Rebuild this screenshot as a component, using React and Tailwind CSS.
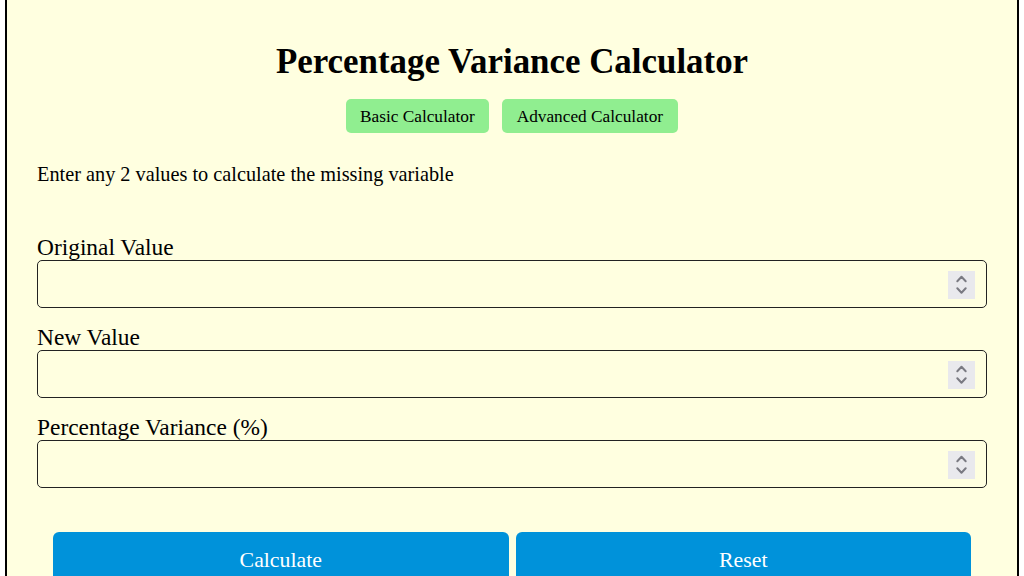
import React from "react";

function Spinner() {
  return (
    <div className="absolute right-[11px] top-[10px] w-[27px] h-[28px] bg-[#e9e9ed]">
      <svg width="27" height="28" viewBox="0 0 27 28" fill="none">
        <polyline points="9.3,10.2 13.5,5.8 17.7,10.2" stroke="#7a7a82" strokeWidth="2" strokeLinecap="round" strokeLinejoin="round" />
        <polyline points="9.3,17.3 13.5,21.7 17.7,17.3" stroke="#7a7a82" strokeWidth="2" strokeLinecap="round" strokeLinejoin="round" />
      </svg>
    </div>
  );
}

function Field({ label }) {
  return (
    <div className="flex flex-col">
      <label className="block pt-[3px] text-[23.4px] leading-[25px] text-black">{label}</label>
      <div className="relative h-[48px] rounded-[5px] border border-[#222] bg-[#ffffe0]">
        <input type="text" className="h-full w-full bg-transparent px-[10px] outline-none" />
        <Spinner />
      </div>
    </div>
  );
}

export default function App() {
  return (
    <div className="min-h-screen bg-white font-['Liberation_Serif','Times_New_Roman',serif]">
      <div className="mx-[5px] min-h-[576px] border-x-2 border-black bg-[#ffffe0] px-[30px] pt-[42px] pb-10">
        <h1 className="text-center text-[34.9px] font-bold leading-[40px] text-black">
          Percentage Variance Calculator
        </h1>
        <div className="mt-[17px] flex justify-center gap-[13px]">
          <button className="h-[34px] rounded-[5px] bg-[#90ee90] pt-[1px] px-[14px] text-[17.3px] text-black">
            Basic Calculator
          </button>
          <button className="h-[34px] rounded-[5px] bg-[#90ee90] pt-[1px] px-[15px] text-[17.3px] text-black">
            Advanced Calculator
          </button>
        </div>
        <p className="mt-[29px] text-[20.3px] leading-[24px] text-black">
          Enter any 2 values to calculate the missing variable
        </p>
        <div className="mt-[46px] flex flex-col gap-[14px]">
          <Field label="Original Value" />
          <Field label="New Value" />
          <Field label="Percentage Variance (%)" />
        </div>
        <div className="mt-[44px] flex gap-[7px] px-4">
          <button className="flex-1 rounded-[6px] bg-[#0092da] pt-[12px] pb-[16px] text-[21.8px] text-white">
            Calculate
          </button>
          <button className="flex-1 rounded-[6px] bg-[#0092da] pt-[12px] pb-[16px] text-[21.8px] text-white">
            Reset
          </button>
        </div>
      </div>
    </div>
  );
}
